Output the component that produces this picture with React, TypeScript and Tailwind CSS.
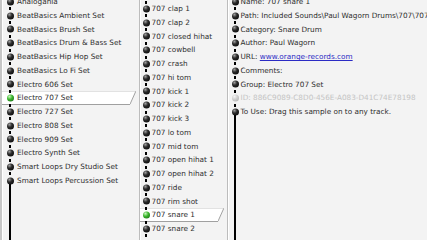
import type { ReactNode } from 'react';

type Tone = 'black' | 'green' | 'gray';

interface Item {
  label: ReactNode;
  tone?: Tone;
  muted?: boolean;
}

interface ColumnProps {
  items: Item[];
  selected?: number;
  offset: string;
  lineLeft: string;
  ballLeft: string;
  textPad: string;
  tail: 'solid' | 'dashed';
  className: string;
}

const balls: Record<Tone, string> = {
  black: 'bg-[radial-gradient(circle_at_35%_30%,#a0a0a0_0%,#2a2a2a_38%,#000_100%)]',
  green: 'bg-[radial-gradient(circle_at_35%_30%,#c8f7bc_0%,#3cb62e_42%,#0f5c0b_100%)]',
  gray: 'bg-[radial-gradient(circle_at_35%_30%,#f4f4f4_0%,#cdcdcd_45%,#ababab_100%)]',
};

function Ball({ tone, left }: { tone: Tone; left: string }) {
  return (
    <span
      className={`absolute top-1/2 -translate-y-1/2 ${left} w-[7px] h-[7px] rounded-full ${balls[tone]}`}
    />
  );
}

// white tab behind the chosen row, right end cut on a slant
function SelectedBg() {
  return (
    <div className="absolute inset-y-0 left-0 right-[3px] flex">
      <div className="flex-1 bg-white border-y border-t-[#e2e2e2] border-b-[#a0a0a0]" />
      <svg viewBox="0 0 6 14" preserveAspectRatio="none" className="h-full w-[6px]">
        <polygon points="0,0 6,0 0,14" fill="#fff" />
        <line x1="0" y1="0.5" x2="6" y2="0.5" stroke="#e2e2e2" vectorEffect="non-scaling-stroke" />
        <line x1="0" y1="13.5" x2="5.8" y2="0.3" stroke="#a0a0a0" vectorEffect="non-scaling-stroke" />
      </svg>
    </div>
  );
}

function Column({ items, selected, offset, lineLeft, ballLeft, textPad, tail, className }: ColumnProps) {
  return (
    <div
      className={`relative h-full flex flex-col overflow-hidden border-l border-[#bcbcbc] shadow-[inset_1px_0_0_#ffffff] ${className}`}
    >
      <div className={`flex flex-col ${offset}`}>
        {items.map((item, i) => (
          <div key={i} className="relative h-[13.75px] flex items-center whitespace-nowrap">
            {selected === i && <SelectedBg />}
            <span className={`absolute ${lineLeft} top-[-1.5px] h-[3px] w-[2px] bg-black`} />
            <Ball tone={item.tone ?? (selected === i ? 'green' : 'black')} left={ballLeft} />
            <span className={`relative ${textPad} ${item.muted ? 'text-[#c4c4c4]' : 'text-[#2e2e2e]'}`}>
              {item.label}
            </span>
          </div>
        ))}
      </div>
      <div className="relative flex-1">
        {tail === 'solid' ? (
          <span className={`absolute ${lineLeft} top-[-3.5px] bottom-0 w-[2px] bg-black`} />
        ) : (
          <span className={`absolute ${lineLeft} top-[-1.5px] h-[3px] w-[2px] bg-black`} />
        )}
      </div>
    </div>
  );
}

const sets: Item[] = [
  'Analogania',
  'BeatBasics Ambient Set',
  'BeatBasics Brush Set',
  'BeatBasics Drum & Bass Set',
  'BeatBasics Hip Hop Set',
  'BeatBasics Lo Fi Set',
  'Electro 606 Set',
  'Electro 707 Set',
  'Electro 727 Set',
  'Electro 808 Set',
  'Electro 909 Set',
  'Electro Synth Set',
  'Smart Loops Dry Studio Set',
  'Smart Loops Percussion Set',
].map((label) => ({ label }));

const samples: Item[] = [
  '707 clap 1',
  '707 clap 2',
  '707 closed hihat',
  '707 cowbell',
  '707 crash',
  '707 hi tom',
  '707 kick 1',
  '707 kick 2',
  '707 kick 3',
  '707 lo tom',
  '707 mid tom',
  '707 open hihat 1',
  '707 open hihat 2',
  '707 ride',
  '707 rim shot',
  '707 snare 1',
  '707 snare 2',
].map((label) => ({ label }));

const details: Item[] = [
  { label: 'Name: 707 snare 1' },
  { label: 'Path: Included Sounds\\Paul Wagorn Drums\\707\\707 snare 1.wav' },
  { label: 'Category: Snare Drum' },
  { label: 'Author: Paul Wagorn' },
  {
    label: (
      <>
        URL: <span className="text-[#2b2bc4] underline">www.orange-records.com</span>
      </>
    ),
  },
  { label: 'Comments:' },
  { label: 'Group: Electro 707 Set' },
  { label: 'ID: 886C9089-C8D0-456E-A083-D41C74E78198', tone: 'gray', muted: true },
  { label: 'To Use: Drag this sample on to any track.' },
];

export default function App() {
  return (
    <div className="w-[427px] h-[240px] overflow-hidden flex bg-[#f3f3f3] font-['DejaVu_Sans',sans-serif] text-[7.3px] leading-none">
      <Column
        items={sets}
        selected={7}
        offset="-mt-[5px]"
        lineLeft="left-[7px]"
        ballLeft="left-[4.5px]"
        textPad="pl-[15px]"
        tail="solid"
        className="w-[139px] shrink-0 border-l-2 border-[#c6c6c6]"
      />
      <Column
        items={samples}
        selected={15}
        offset="mt-[2px]"
        lineLeft="left-[5px]"
        ballLeft="left-[2.5px]"
        textPad="pl-[11.5px]"
        tail="dashed"
        className="w-[88px] shrink-0"
      />
      <Column
        items={details}
        offset="-mt-[5px]"
        lineLeft="left-[6px]"
        ballLeft="left-[3.5px]"
        textPad="pl-[12.5px]"
        tail="solid"
        className="flex-1"
      />
    </div>
  );
}
